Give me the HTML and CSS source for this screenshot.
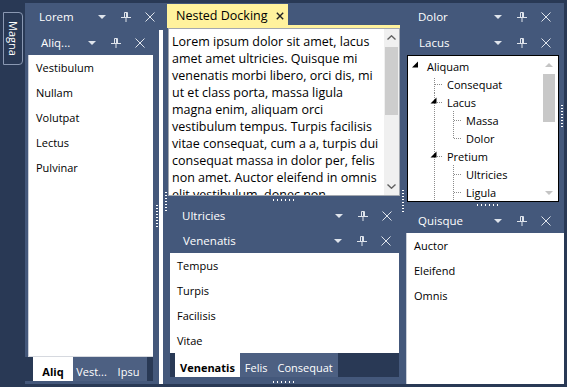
FILE: index.html
```html
<!DOCTYPE html>
<html>
<head>
<meta charset="utf-8">
<link rel="stylesheet" href="styles.css">
</head>
<body>
<div class="app">
  <aside class="autohide"><div class="ah-tab">Magna</div></aside>
  <div class="main">
    <section class="col-left">
      <header class="hdr hdr-lorem">
        <span class="title">Lorem</span>
        <span class="icons">
          <span class="ic"><svg width="8" height="4" viewBox="0 0 8 4"><path class="tri" d="M0 0H8L4 4Z"/></svg></span>
          <span class="ic"><svg width="10" height="10" viewBox="0 0 10 10"><path class="st" d="M3.5 0.5H6.5V5.5H3.5Z M5.5 1V5 M0 5.5H10 M5 5.5V10"/></svg></span>
          <span class="ic"><svg width="10" height="10" viewBox="0 0 10 10"><path class="st" d="M0.5 0.5L9.5 9.5M9.5 0.5L0.5 9.5"/></svg></span>
        </span>
      </header>
      <div class="lbody">
        <div class="pane pane-aliq">
          <header class="hdr hdr-aliq">
            <span class="title">Aliq...</span>
            <span class="icons">
              <span class="ic"><svg width="8" height="4" viewBox="0 0 8 4"><path class="tri" d="M0 0H8L4 4Z"/></svg></span>
              <span class="ic"><svg width="10" height="10" viewBox="0 0 10 10"><path class="st" d="M3.5 0.5H6.5V5.5H3.5Z M5.5 1V5 M0 5.5H10 M5 5.5V10"/></svg></span>
              <span class="ic"><svg width="10" height="10" viewBox="0 0 10 10"><path class="st" d="M0.5 0.5L9.5 9.5M9.5 0.5L0.5 9.5"/></svg></span>
            </span>
          </header>
          <ul class="list list-aliq">
            <li>Vestibulum</li>
            <li>Nullam</li>
            <li>Volutpat</li>
            <li>Lectus</li>
            <li>Pulvinar</li>
          </ul>
          <div class="tabs tabs-left">
            <span class="tab fixed w40 active">Aliq</span>
            <span class="tab fixed w37">Vest...</span>
            <span class="tab fixed w37">Ipsu</span>
          </div>
        </div>
        <div class="vsplit"><i class="grip-v"></i></div>
        <div class="host-strip"></div>
      </div>
    </section>

    <section class="col-mid">
      <i class="grip-v grip-mid-left"></i>
      <div class="doc-tabs">
        <div class="doc-tab">
          <span>Nested Docking</span>
          <svg class="doc-close" width="8" height="8" viewBox="0 0 8 8"><path d="M0.8 0.8L7.2 7.2M7.2 0.8L0.8 7.2"/></svg>
        </div>
      </div>
      <div class="doc-bar"></div>
      <div class="doc-body">
        <div class="doc-text">Lorem ipsum dolor sit amet, lacus<br>amet amet ultricies. Quisque mi<br>venenatis morbi libero, orci dis, mi<br>ut et class porta, massa ligula<br>magna enim, aliquam orci<br>vestibulum tempus. Turpis facilisis<br>vitae consequat, cum a a, turpis dui<br>consequat massa in dolor per, felis<br>non amet. Auctor eleifend in omnis<br>elit vestibulum, donec non</div>
        <div class="vscroll">
          <span class="sarrow"><svg width="9" height="5" viewBox="0 0 9 5"><path d="M0.5 4.5L4.5 0.8L8.5 4.5"/></svg></span>
          <span class="sthumb"></span>
          <span class="strack"></span>
          <span class="sarrow"><svg width="9" height="5" viewBox="0 0 9 5"><path d="M0.5 0.5L4.5 4.2L8.5 0.5"/></svg></span>
        </div>
      </div>
      <div class="hsplit"><i class="grip-h"></i></div>
      <div class="outer-ult">
        <header class="hdr hdr-ult">
          <span class="title">Ultricies</span>
          <span class="icons">
            <span class="ic"><svg width="8" height="4" viewBox="0 0 8 4"><path class="tri" d="M0 0H8L4 4Z"/></svg></span>
            <span class="ic"><svg width="10" height="10" viewBox="0 0 10 10"><path class="st" d="M3.5 0.5H6.5V5.5H3.5Z M5.5 1V5 M0 5.5H10 M5 5.5V10"/></svg></span>
            <span class="ic"><svg width="10" height="10" viewBox="0 0 10 10"><path class="st" d="M0.5 0.5L9.5 9.5M9.5 0.5L0.5 9.5"/></svg></span>
          </span>
        </header>
        <div class="pane pane-ven">
          <header class="hdr hdr-ven">
            <span class="title">Venenatis</span>
            <span class="icons">
              <span class="ic"><svg width="8" height="4" viewBox="0 0 8 4"><path class="tri" d="M0 0H8L4 4Z"/></svg></span>
              <span class="ic"><svg width="10" height="10" viewBox="0 0 10 10"><path class="st" d="M3.5 0.5H6.5V5.5H3.5Z M5.5 1V5 M0 5.5H10 M5 5.5V10"/></svg></span>
              <span class="ic"><svg width="10" height="10" viewBox="0 0 10 10"><path class="st" d="M0.5 0.5L9.5 9.5M9.5 0.5L0.5 9.5"/></svg></span>
            </span>
          </header>
          <ul class="list list-ven">
            <li>Tempus</li>
            <li>Turpis</li>
            <li>Facilisis</li>
            <li>Vitae</li>
          </ul>
          <div class="tabs tabs-mid">
            <span class="tab active">Venenatis</span>
            <span class="tab">Felis</span>
            <span class="tab">Consequat</span>
          </div>
        </div>
        <div class="bsplit"><i class="grip-h"></i></div>
      </div>
    </section>

    <section class="col-right">
      <i class="grip-v grip-right-left"></i>
      <div class="rtop">
        <div class="rtop-main">
          <header class="hdr hdr-dolor">
            <span class="title">Dolor</span>
            <span class="icons">
              <span class="ic"><svg width="8" height="4" viewBox="0 0 8 4"><path class="tri" d="M0 0H8L4 4Z"/></svg></span>
              <span class="ic"><svg width="10" height="10" viewBox="0 0 10 10"><path class="st" d="M3.5 0.5H6.5V5.5H3.5Z M5.5 1V5 M0 5.5H10 M5 5.5V10"/></svg></span>
              <span class="ic"><svg width="10" height="10" viewBox="0 0 10 10"><path class="st" d="M0.5 0.5L9.5 9.5M9.5 0.5L0.5 9.5"/></svg></span>
            </span>
          </header>
          <div class="pane pane-lacus">
            <header class="hdr hdr-lacus">
              <span class="title">Lacus</span>
              <span class="icons">
                <span class="ic"><svg width="8" height="4" viewBox="0 0 8 4"><path class="tri" d="M0 0H8L4 4Z"/></svg></span>
                <span class="ic"><svg width="10" height="10" viewBox="0 0 10 10"><path class="st" d="M3.5 0.5H6.5V5.5H3.5Z M5.5 1V5 M0 5.5H10 M5 5.5V10"/></svg></span>
                <span class="ic"><svg width="10" height="10" viewBox="0 0 10 10"><path class="st" d="M0.5 0.5L9.5 9.5M9.5 0.5L0.5 9.5"/></svg></span>
              </span>
            </header>
            <div class="tree">
              <div class="tree-rows">
                <div class="trow"><svg width="19" height="18" viewBox="0 0 19 18"><path class="exp" d="M10 4.5V10.5H4Z"/></svg><span>Aliquam</span></div>
                <div class="trow"><svg width="39" height="18" viewBox="0 0 39 18"><path class="dot" d="M26.5 3V18M27 9.5H35"/></svg><span>Consequat</span></div>
                <div class="trow"><svg width="39" height="18" viewBox="0 0 39 18"><path class="dot" d="M26.5 0V18M29 9.5H35"/><path class="exp" d="M28.5 4.5V10.5H22.5Z"/></svg><span>Lacus</span></div>
                <div class="trow"><svg width="58" height="18" viewBox="0 0 58 18"><path class="dot" d="M26.5 0V18M45.5 0V18M46 9.5H54"/></svg><span>Massa</span></div>
                <div class="trow"><svg width="58" height="18" viewBox="0 0 58 18"><path class="dot" d="M26.5 0V18M45.5 0V9.5M46 9.5H54"/></svg><span>Dolor</span></div>
                <div class="trow"><svg width="39" height="18" viewBox="0 0 39 18"><path class="dot" d="M26.5 0V18M29 9.5H35"/><path class="exp" d="M28.5 4.5V10.5H22.5Z"/></svg><span>Pretium</span></div>
                <div class="trow"><svg width="58" height="18" viewBox="0 0 58 18"><path class="dot" d="M26.5 0V18M45.5 0V18M46 9.5H54"/></svg><span>Ultricies</span></div>
                <div class="trow"><svg width="58" height="18" viewBox="0 0 58 18"><path class="dot" d="M26.5 0V18M45.5 0V18M46 9.5H54"/></svg><span>Ligula</span></div>
              </div>
              <div class="tscroll">
                <span class="tarrow"><svg width="8" height="4" viewBox="0 0 8 4"><path d="M0 4H8L4 0Z"/></svg></span>
                <span class="tthumb"></span>
                <span class="ttrack"></span>
                <span class="tarrow"><svg width="8" height="4" viewBox="0 0 8 4"><path d="M0 0H8L4 4Z"/></svg></span>
              </div>
            </div>
          </div>
        </div>
        <div class="rgrip-col"><i class="grip-v"></i></div>
      </div>
      <div class="rsplit"><i class="grip-h"></i></div>
      <header class="hdr hdr-quisque">
        <span class="title">Quisque</span>
        <span class="icons">
          <span class="ic"><svg width="8" height="4" viewBox="0 0 8 4"><path class="tri" d="M0 0H8L4 4Z"/></svg></span>
          <span class="ic"><svg width="10" height="10" viewBox="0 0 10 10"><path class="st" d="M3.5 0.5H6.5V5.5H3.5Z M5.5 1V5 M0 5.5H10 M5 5.5V10"/></svg></span>
          <span class="ic"><svg width="10" height="10" viewBox="0 0 10 10"><path class="st" d="M0.5 0.5L9.5 9.5M9.5 0.5L0.5 9.5"/></svg></span>
        </span>
      </header>
      <ul class="list list-q">
        <li>Auctor</li>
        <li>Eleifend</li>
        <li>Omnis</li>
      </ul>
    </section>
  </div>
</div>
</body>
</html>
```

FILE: styles.css
```css
* { box-sizing: border-box; }

body {
  margin: 0;
  background: #293955;
  font-family: "Open Sans", "Noto Sans", sans-serif;
  color: #000;
}

.app {
  display: flex;
  width: 567px;
  height: 387px;
  overflow: hidden;
}

/* auto-hide strip */
.autohide {
  width: 25px;
  flex: none;
  padding: 12px 0 0 3px;
}

.ah-tab {
  width: 20px;
  height: 53px;
  border: 1px solid #8a98b2;
  border-radius: 0 4px 4px 0;
  writing-mode: vertical-rl;
  display: flex;
  justify-content: center;
  align-items: center;
  color: #fff;
  font-size: 11px;
}

.main {
  display: flex;
  margin-top: 3px;
  width: 539px;
  height: 381px;
  flex: none;
}

/* headers */
.hdr {
  display: flex;
  align-items: center;
  flex: none;
  height: 25px;
  color: #fff;
  font-size: 11.5px;
}

.hdr .title {
  flex: 1;
  white-space: nowrap;
}

.icons {
  display: flex;
  align-items: center;
}

.ic {
  width: 24px;
  height: 12px;
  display: flex;
  align-items: center;
  justify-content: center;
}

.ic svg { display: block; }

.tri { fill: #dfe4ec; }
.st { fill: none; stroke: #dfe4ec; stroke-width: 1; }

.hdr-lorem { height: 27px; padding-left: 14px; padding-right: 1px; }
.hdr-aliq { padding-left: 16px; padding-right: 1px; }
.hdr-ult { padding-left: 15px; padding-right: 1px; }
.hdr-ven { padding-left: 13px; padding-right: 1px; }
.hdr-dolor { height: 27px; padding-left: 16px; padding-right: 1px; }
.hdr-lacus { padding-left: 14px; padding-right: 1px; }
.hdr-quisque { padding-left: 16px; padding-right: 6px; }

/* lists */
.list {
  list-style: none;
  margin: 0;
  padding: 0;
  background: #fff;
  border-left: 1px solid #c9ced8;
  flex: 1;
  min-height: 0;
}

.list li {
  height: 25px;
  line-height: 25px;
  padding-left: 7px;
  font-size: 11px;
  white-space: nowrap;
}

/* tabs */
.tabs {
  display: flex;
  flex: none;
  height: 24px;
  background: #293955;
}

.tab {
  display: flex;
  align-items: center;
  justify-content: center;
  padding: 4px 5px 0;
  background: #4d6082;
  color: #fff;
  font-size: 11px;
  white-space: nowrap;
  overflow: hidden;
}

.tab.active {
  background: #fff;
  color: #000;
  font-weight: 700;
}

.tab.fixed { padding-left: 0; padding-right: 0; }
.w40 { width: 40px; }
.w37 { width: 37px; }

.tabs-left { padding-left: 8px; padding-right: 6px; }
.tabs-mid { padding-left: 5px; }

/* grips */
.grip-h {
  display: block;
  width: 22px;
  height: 2px;
  background: repeating-linear-gradient(90deg, #fff 0 1px, transparent 1px 4px);
}

.grip-v {
  display: block;
  width: 2px;
  height: 22px;
  background: repeating-linear-gradient(180deg, #fff 0 1px, transparent 1px 3px);
}

/* left column */
.col-left {
  width: 138px;
  flex: none;
  display: flex;
  flex-direction: column;
  background: #44587b;
}

.lbody {
  flex: 1;
  display: flex;
  min-height: 0;
}

.pane {
  display: flex;
  flex-direction: column;
  min-height: 0;
}

.pane-aliq {
  width: 128px;
  padding-bottom: 3px;
}

.list-aliq {
  margin-left: 3px;
  border-bottom: 1px solid #d6d9df;
}

.vsplit {
  width: 6px;
  display: flex;
  justify-content: center;
  align-items: center;
  padding-top: 18px;
  padding-left: 2px;
}

.host-strip {
  width: 4px;
  background: #fff;
}

/* middle column */
.col-mid {
  position: relative;
  width: 239px;
  flex: none;
  display: flex;
  flex-direction: column;
  padding: 0 2px 0 4px;
  background: #44587b;
}

.grip-mid-left {
  position: absolute;
  left: 2px;
  top: 189px;
  height: 21px;
}

.doc-tabs {
  height: 22px;
  display: flex;
  align-items: flex-end;
  flex: none;
}

.doc-tab {
  width: 121px;
  height: 21px;
  background: #fff29d;
  display: flex;
  align-items: center;
  padding: 2px 0 0 9px;
  font-size: 12.5px;
  white-space: nowrap;
}

.doc-close {
  margin-left: 8px;
  margin-top: 1px;
}

.doc-close path {
  stroke: #222;
  stroke-width: 1.4;
  fill: none;
}

.doc-bar {
  height: 3px;
  background: #fff29d;
  flex: none;
}

.doc-body {
  height: 168px;
  flex: none;
  margin-left: 1px;
  border: 1px solid #a3a8b0;
  background: #fff;
  display: flex;
  overflow: hidden;
}

.doc-text {
  flex: 1;
  padding: 4px 0 0 3px;
  font-size: 12.5px;
  line-height: 17px;
  white-space: nowrap;
  overflow: hidden;
}

.vscroll {
  width: 15px;
  background: #f0f0f0;
  display: flex;
  flex-direction: column;
}

.sarrow {
  height: 17px;
  display: flex;
  align-items: center;
  justify-content: center;
  flex: none;
}

.sarrow path {
  fill: none;
  stroke: #606060;
  stroke-width: 1.4;
}

.sthumb {
  height: 68px;
  margin: 1px 1px 0;
  background: #cdcdcd;
  flex: none;
}

.strack { flex: 1; }

.hsplit {
  height: 7px;
  flex: none;
  display: flex;
  justify-content: center;
  align-items: center;
  padding-top: 1px;
}

.outer-ult {
  flex: 1;
  display: flex;
  flex-direction: column;
  min-height: 0;
}

.pane-ven {
  flex: 1;
  margin: 0 1px 0 3px;
}

.list-ven {
  border-left: none;
}

.bsplit {
  height: 7px;
  flex: none;
  display: flex;
  justify-content: center;
  align-items: center;
  padding-top: 2px;
}

/* right column */
.col-right {
  position: relative;
  width: 162px;
  flex: none;
  display: flex;
  flex-direction: column;
  background: #44587b;
}

.grip-right-left {
  position: absolute;
  left: 0;
  top: 187px;
  height: 22px;
}

.rtop {
  height: 199px;
  flex: none;
  display: flex;
}

.rtop-main {
  width: 157px;
  display: flex;
  flex-direction: column;
}

.pane-lacus {
  flex: 1;
  margin-left: 3px;
}

.tree {
  flex: 1;
  margin-left: 2px;
  border: 1px solid #000;
  background: #fff;
  display: flex;
  min-height: 0;
  overflow: hidden;
}

.tree-rows {
  flex: 1;
  padding-top: 1px;
  overflow: hidden;
}

.trow {
  height: 18px;
  display: flex;
  align-items: center;
  font-size: 11px;
  white-space: nowrap;
}

.trow svg {
  flex: none;
  display: block;
}

.dot {
  fill: none;
  stroke: #8c8c8c;
  stroke-width: 1;
  stroke-dasharray: 1 1;
}

.exp { fill: #000; }

.tscroll {
  width: 15px;
  display: flex;
  flex-direction: column;
  padding-right: 3px;
}

.tarrow {
  height: 17px;
  flex: none;
  display: flex;
  align-items: center;
  justify-content: center;
}

.tarrow path { fill: #c4c4c4; }

.tthumb {
  height: 48px;
  flex: none;
  margin-top: 1px;
  background: #c8c8c8;
}

.ttrack { flex: 1; }

.rgrip-col {
  width: 5px;
  display: flex;
  align-items: center;
  justify-content: flex-end;
  padding-top: 27px;
  padding-right: 1px;
}

.rsplit {
  height: 6px;
  flex: none;
  display: flex;
  justify-content: center;
  align-items: center;
  padding-left: 9px;
}

.list-q {
  margin-left: 4px;
}
```
